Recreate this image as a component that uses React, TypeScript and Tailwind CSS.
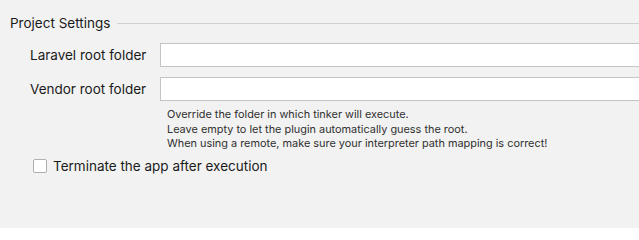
export default function App() {
  return (
    <div className="h-[228px] w-full overflow-hidden bg-[#f2f2f2] font-['Inter','Noto_Sans',sans-serif] text-[13.5px] text-[#1a1a1a]">
      <div className="flex items-center pl-[10px] pt-[14px]">
        <span className="leading-[18px]">Project Settings</span>
        <div className="ml-[7px] h-px flex-1 bg-[#d1d1d1]" />
      </div>

      <div className="mt-[11px] grid grid-cols-[130px_1fr] items-center gap-y-[10px] pl-[30px]">
        <label className="leading-[18px]">Laravel root folder</label>
        <input className="h-[24px] border border-r-0 border-[#c4c4c4] bg-white outline-none" />
        <label className="leading-[18px]">Vendor root folder</label>
        <input className="h-[24px] border border-r-0 border-[#c4c4c4] bg-white outline-none" />
      </div>

      <div className="mt-[6px] pl-[167px] text-[10.9px] leading-[14.5px] text-[#303030]">
        <p>Override the folder in which tinker will execute.</p>
        <p>Leave empty to let the plugin automatically guess the root.</p>
        <p>When using a remote, make sure your interpreter path mapping is correct!</p>
      </div>

      <label className="mt-[6px] flex items-center pl-[33px]">
        <span className="h-[14px] w-[14px] rounded-[2px] border border-[#b0b0b0] bg-white" />
        <span className="ml-[6px] leading-[18px]">Terminate the app after execution</span>
      </label>
    </div>
  );
}
